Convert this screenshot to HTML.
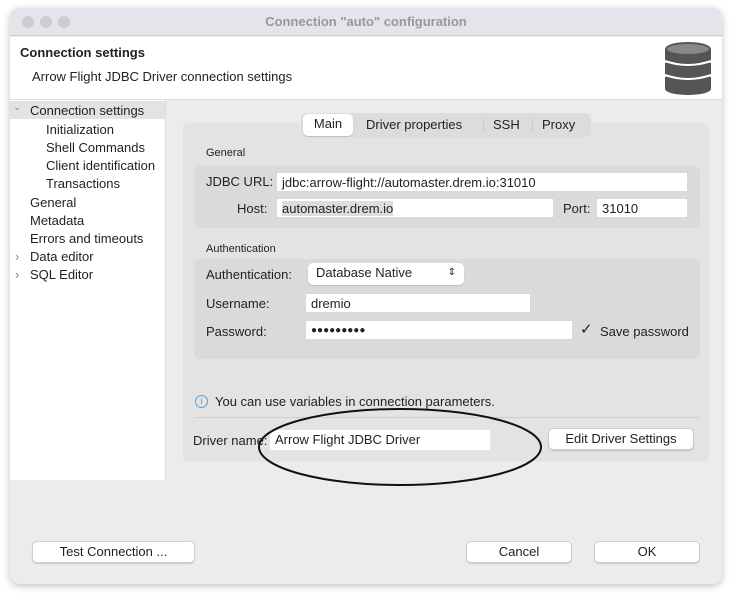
<!DOCTYPE html><html><head><style>
body{margin:0;width:737px;height:601px;background:#fff;font-family:"Liberation Sans",sans-serif;font-size:13px;color:#222;position:relative;overflow:hidden}
div,span{position:absolute;box-sizing:border-box}
.t{white-space:nowrap}
.in{background:#fff;border:1px solid #d8d8d8;height:20px;padding:2px 5px}
.btn{background:#fff;border:1px solid #cfcfcf;border-radius:5px;height:22px;text-align:center;line-height:20px;box-shadow:0 1px 1px rgba(0,0,0,.15)}
</style></head><body>
<div style="left:10px;top:8px;width:712px;height:576px;background:#ececec;border-radius:10px;box-shadow:0 2px 8px rgba(0,0,0,.25);overflow:hidden">
 <div style="left:0;top:0;width:712px;height:28px;background:#e7e3eb;border-bottom:1px solid #d0ccd3"></div>
 <div style="left:12px;top:8px;width:12px;height:12px;border-radius:6px;background:#cfcbd2"></div>
 <div style="left:30px;top:8px;width:12px;height:12px;border-radius:6px;background:#cfcbd2"></div>
 <div style="left:48px;top:8px;width:12px;height:12px;border-radius:6px;background:#cfcbd2"></div>
 <div class="t" style="left:0;width:712px;top:6px;text-align:center;color:#9a96a0;font-weight:bold;font-size:13px">Connection "auto" configuration</div>
 <div style="left:0;top:29px;width:712px;height:63px;background:#fff;border-bottom:1px solid #ddd"></div>
 <div class="t" style="left:10px;top:37px;font-weight:bold">Connection settings</div>
 <div class="t" style="left:22px;top:61px">Arrow Flight JDBC Driver connection settings</div>
 <svg style="position:absolute;left:654px;top:33px" width="48" height="54"><g fill="#555"><ellipse cx="24" cy="8" rx="23" ry="7"/><rect x="1" y="8" width="46" height="12"/><ellipse cx="24" cy="20" rx="23" ry="6"/><rect x="1" y="22" width="46" height="12"/><ellipse cx="24" cy="34" rx="23" ry="6"/><rect x="1" y="36" width="46" height="12"/><ellipse cx="24" cy="48" rx="23" ry="6"/></g><ellipse cx="24" cy="8" rx="21" ry="5" fill="#888"/><path d="M1 20q23 8 46 0M1 34q23 8 46 0" stroke="#fff" stroke-width="2" fill="none"/></svg>
 <div style="left:0;top:92px;width:156px;height:380px;background:#fff;border-right:1px solid #ddd"></div>
 <div style="left:0;top:93px;width:155px;height:18px;background:#e3e3e3"></div>
 <div class="t" style="left:3px;top:94px;color:#888;font-size:10px">⌄</div>
 <div class="t" style="left:20px;top:95px">Connection settings</div>
 <div class="t" style="left:36px;top:114px">Initialization</div>
 <div class="t" style="left:36px;top:132px">Shell Commands</div>
 <div class="t" style="left:36px;top:150px">Client identification</div>
 <div class="t" style="left:36px;top:168px">Transactions</div>
 <div class="t" style="left:20px;top:187px">General</div>
 <div class="t" style="left:20px;top:205px">Metadata</div>
 <div class="t" style="left:20px;top:223px">Errors and timeouts</div>
 <div class="t" style="left:5px;top:241px;color:#888">›</div>
 <div class="t" style="left:20px;top:241px">Data editor</div>
 <div class="t" style="left:5px;top:259px;color:#888">›</div>
 <div class="t" style="left:20px;top:259px">SQL Editor</div>
 <div style="left:173px;top:115px;width:526px;height:339px;background:#e3e3e3;border-radius:6px"></div>
 <div style="left:291px;top:105px;width:290px;height:24px;background:#dcdcdc;border-radius:6px"></div>
 <div class="btn" style="left:293px;top:106px;width:50px;border:none">Main</div>
 <div class="t" style="left:356px;top:109px">Driver properties</div>
 <div style="left:473px;top:110px;width:1px;height:14px;background:#ccc"></div>
 <div class="t" style="left:483px;top:109px">SSH</div>
 <div style="left:522px;top:110px;width:1px;height:14px;background:#ccc"></div>
 <div class="t" style="left:532px;top:109px">Proxy</div>
 <div class="t" style="left:196px;top:139px;font-size:11px">General</div>
 <div style="left:184px;top:158px;width:506px;height:62px;background:#dadada;border-radius:6px"></div>
 <div class="t" style="left:196px;top:166px">JDBC URL:</div>
 <div class="in" style="left:266px;top:164px;width:412px">jdbc:arrow-flight://automaster.drem.io:31010</div>
 <div class="t" style="left:227px;top:193px">Host:</div>
 <div class="in" style="left:266px;top:190px;width:278px"><span style="position:static;background:#ddd">automaster.drem.io</span></div>
 <div class="t" style="left:553px;top:193px">Port:</div>
 <div class="in" style="left:586px;top:190px;width:92px">31010</div>
 <div class="t" style="left:196px;top:235px;font-size:11px">Authentication</div>
 <div style="left:184px;top:251px;width:506px;height:100px;background:#dadada;border-radius:6px"></div>
 <div class="t" style="left:196px;top:259px">Authentication:</div>
 <div class="btn" style="left:298px;top:255px;width:156px;text-align:left;padding-left:8px;border:none">Database Native<span style="right:8px;top:0;font-size:10px">⇕</span></div>
 <div class="t" style="left:196px;top:288px">Username:</div>
 <div class="in" style="left:295px;top:285px;width:226px">dremio</div>
 <div class="t" style="left:196px;top:316px">Password:</div>
 <div class="in" style="left:295px;top:312px;width:268px;font-size:10px;padding-top:4px;letter-spacing:0">●●●●●●●●●</div>
 <div class="t" style="left:570px;top:312px;font-size:15px">✓</div>
 <div class="t" style="left:590px;top:316px;width:89px;overflow:hidden">Save password</div>
 <div style="left:185px;top:387px;width:13px;height:13px;border:1px solid #5aa0d8;border-radius:7px;color:#5aa0d8;font-size:9px;text-align:center;line-height:11px">i</div>
 <div class="t" style="left:205px;top:386px">You can use variables in connection parameters.</div>
 <div style="left:184px;top:409px;width:506px;height:1px;background:#d0d0d0"></div>
 <div class="t" style="left:183px;top:425px">Driver name:</div>
 <div class="in" style="left:260px;top:422px;width:220px;border:none">Arrow Flight JDBC Driver</div>
 <div class="btn" style="left:538px;top:420px;width:146px">Edit Driver Settings</div>
 <svg style="position:absolute;left:245px;top:398px" width="295" height="82"><ellipse cx="145" cy="41" rx="141" ry="38" fill="none" stroke="#111" stroke-width="2"/></svg>
 <div class="btn" style="left:22px;top:533px;width:163px">Test Connection ...</div>
 <div class="btn" style="left:456px;top:533px;width:106px">Cancel</div>
 <div class="btn" style="left:584px;top:533px;width:106px">OK</div>
</div>
</body></html>
